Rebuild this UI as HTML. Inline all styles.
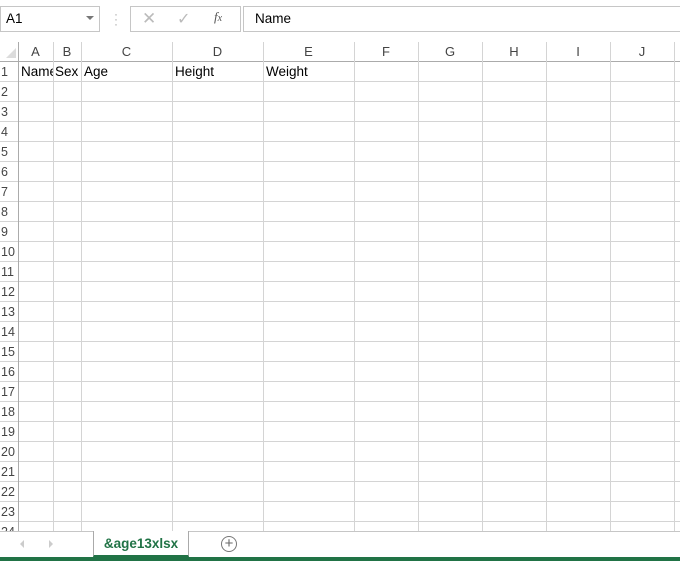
<!DOCTYPE html>
<html><head><style>
body{margin:0;width:680px;height:561px;background:#fff;position:relative;overflow:hidden;font-family:"Liberation Sans",sans-serif;}
.a{position:absolute}
.cols div{position:absolute;top:42px;height:19px;line-height:19px;text-align:center;font-size:13px;color:#444}
.rows div{position:absolute;left:0;width:16px;height:20px;line-height:20px;font-size:12.5px;color:#444;padding-left:1px}
.t{position:absolute;top:62px;height:20px;line-height:20px;font-size:13.5px;color:#000;white-space:nowrap;overflow:hidden}
</style></head><body>
<!-- top bar -->
<div class="a" style="left:0;top:6px;width:98px;height:24px;border:1px solid #c6c6c6;font-size:13.5px;line-height:24px;"><span style="padding-left:5px">A1</span></div>
<div class="a" style="left:86px;top:16px;width:0;height:0;border-left:4px solid transparent;border-right:4px solid transparent;border-top:4px solid #777"></div>
<div class="a" style="left:114px;top:12px;color:#aaa;font-size:12px;line-height:5px">·<br>·<br>·</div>
<div class="a" style="left:130px;top:6px;width:109px;height:24px;border:1px solid #c6c6c6"></div>
<div class="a" style="left:142px;top:9px;color:#bbb;font-size:17px">✕</div>
<div class="a" style="left:177px;top:9px;color:#bbb;font-size:16px">✓</div>
<div class="a" style="left:214px;top:9px;color:#555;font-size:13px;font-style:italic;font-family:'Liberation Serif',serif">f<span style="font-size:10px">x</span></div>
<div class="a" style="left:243px;top:6px;width:437px;height:24px;border:1px solid #c6c6c6;border-right:none;font-size:13.5px;line-height:24px"><span style="padding-left:11px">Name</span></div>
<!-- grid -->
<div class="a" style="left:0;top:42px;width:680px;height:489px;background:repeating-linear-gradient(to bottom,transparent 0,transparent 19px,#d4d4d4 19px,#d4d4d4 20px);background-position:0 0"></div>
<div class="a" style="left:0;top:42px;width:680px;height:20px;background:#fff"></div>
<div class="a" style="left:0;top:61px;width:680px;height:1px;background:#ababab"></div>
<div class="a" style="left:18px;top:42px;width:1px;height:489px;background:#ababab"></div>
<div class="a" style="left:53px;top:42px;width:1px;height:489px;background:#d4d4d4"></div>
<div class="a" style="left:81px;top:42px;width:1px;height:489px;background:#d4d4d4"></div>
<div class="a" style="left:172px;top:42px;width:1px;height:489px;background:#d4d4d4"></div>
<div class="a" style="left:263px;top:42px;width:1px;height:489px;background:#d4d4d4"></div>
<div class="a" style="left:354px;top:42px;width:1px;height:489px;background:#d4d4d4"></div>
<div class="a" style="left:418px;top:42px;width:1px;height:489px;background:#d4d4d4"></div>
<div class="a" style="left:482px;top:42px;width:1px;height:489px;background:#d4d4d4"></div>
<div class="a" style="left:546px;top:42px;width:1px;height:489px;background:#d4d4d4"></div>
<div class="a" style="left:610px;top:42px;width:1px;height:489px;background:#d4d4d4"></div>
<div class="a" style="left:674px;top:42px;width:1px;height:489px;background:#d4d4d4"></div>
<div class="a" style="left:6px;top:48px;width:0;height:0;border-left:10px solid transparent;border-bottom:10px solid #dcdcdc"></div>
<div class="cols">
<div style="left:18px;width:35px">A</div><div style="left:53px;width:28px">B</div><div style="left:81px;width:91px">C</div><div style="left:172px;width:91px">D</div><div style="left:263px;width:91px">E</div><div style="left:354px;width:64px">F</div><div style="left:418px;width:64px">G</div><div style="left:482px;width:64px">H</div><div style="left:546px;width:64px">I</div><div style="left:610px;width:64px">J</div>
</div>
<div class="rows">
<div style="top:62px">1</div><div style="top:82px">2</div><div style="top:102px">3</div><div style="top:122px">4</div><div style="top:142px">5</div><div style="top:162px">6</div><div style="top:182px">7</div><div style="top:202px">8</div><div style="top:222px">9</div><div style="top:242px">10</div><div style="top:262px">11</div><div style="top:282px">12</div><div style="top:302px">13</div><div style="top:322px">14</div><div style="top:342px">15</div><div style="top:362px">16</div><div style="top:382px">17</div><div style="top:402px">18</div><div style="top:422px">19</div><div style="top:442px">20</div><div style="top:462px">21</div><div style="top:482px">22</div><div style="top:502px">23</div><div style="top:522px">24</div>
</div>
<div class="t" style="left:21px;width:32px">Name</div>
<div class="t" style="left:55px">Sex</div>
<div class="t" style="left:84px">Age</div>
<div class="t" style="left:175px">Height</div>
<div class="t" style="left:266px">Weight</div>
<!-- tab bar -->
<div class="a" style="left:0;top:531px;width:680px;height:26px;background:#fff;border-top:1px solid #c6c6c6"></div>
<div class="a" style="left:20px;top:540px;width:0;height:0;border-top:4px solid transparent;border-bottom:4px solid transparent;border-right:4px solid #ccc"></div>
<div class="a" style="left:49px;top:540px;width:0;height:0;border-top:4px solid transparent;border-bottom:4px solid transparent;border-left:4px solid #ccc"></div>
<div class="a" style="left:93px;top:531px;width:94px;height:24px;background:#fff;border-left:1px solid #aaa;border-right:1px solid #aaa;border-bottom:2px solid #217346;color:#217346;font-weight:bold;font-size:13.5px;text-align:center;line-height:26px">&amp;age13xlsx</div>
<div class="a" style="left:221px;top:536px;width:14px;height:14px;border:1px solid #777;border-radius:50%;text-align:center;line-height:14px;font-size:15px;color:#666">+</div>
<div class="a" style="left:0;top:557px;width:680px;height:4px;background:#217346"></div>
</body></html>
